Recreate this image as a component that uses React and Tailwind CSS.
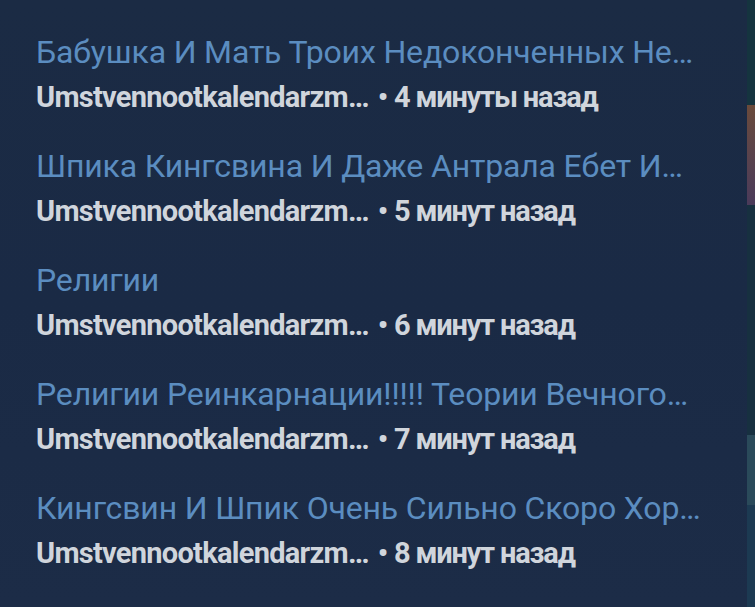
const items = [
  { title: "Бабушка И Мать Троих Недоконченных Не…", time: "4 минуты назад" },
  { title: "Шпика Кингсвина И Даже Антрала Ебет И…", time: "5 минут назад" },
  { title: "Религии", time: "6 минут назад" },
  { title: "Религии Реинкарнации!!!!! Теории Вечного…", time: "7 минут назад" },
  { title: "Кингсвин И Шпик Очень Сильно Скоро Хор…", time: "8 минут назад" },
];

export default function App() {
  return (
    <div className="flex h-[607px] w-[755px] overflow-hidden bg-[#1b2a42]" style={{ fontFamily: "Roboto, 'Noto Sans', sans-serif" }}>
      <div className="flex min-w-0 flex-1 flex-col gap-[24px] bg-gradient-to-b from-[#1b2b44] via-[#1a2a45] to-[#1c2c47] pl-[36px] pr-[20px] pt-[32px]">
        {items.map((it, i) => (
          <div key={i} className="flex min-w-0 flex-col">
            <div className="whitespace-nowrap text-[32px] leading-[40px] tracking-[-0.005em] text-[#5b8dc0]">{it.title}</div>
            <div className="flex items-center whitespace-nowrap text-[29px] font-bold leading-[50px] tracking-[-0.04em] text-[#d0d5dc]">
              <span className="tracking-[-0.025em]">Umstvennootkalendarzm…</span>
              <span className="ml-[9px]">•</span>
              <span className="ml-[7px]">{it.time}</span>
            </div>
          </div>
        ))}
      </div>
      <div className="flex w-[8px] flex-col">
        <div className="h-[105px] bg-[#15343f]" />
        <div className="h-[100px] bg-gradient-to-b from-[#6a4a3a] to-[#4a3a5a]" />
        <div className="h-[230px] bg-[#173040]" />
        <div className="h-[70px] bg-[#2a4a5a]" />
        <div className="flex-1 bg-[#1c3a52]" />
      </div>
    </div>
  );
}
